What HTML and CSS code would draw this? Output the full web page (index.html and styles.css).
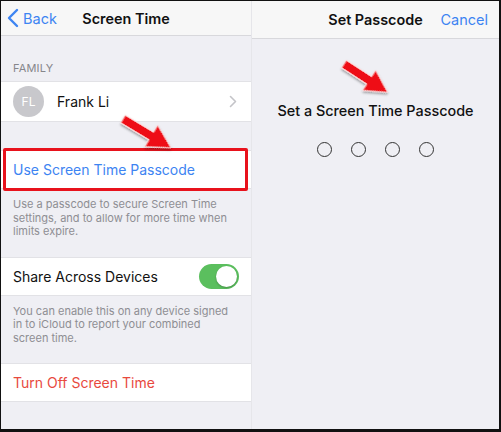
FILE: index.html
```html
<!DOCTYPE html>
<html lang="en">
<head>
  <meta charset="UTF-8">
  <title>Screen Time Passcode</title>
  <link rel="stylesheet" href="styles.css">
</head>
<body>
<div class="frame">
  <div class="panel panel-left">
    <div class="nav">
      <div class="nav-back">
        <svg class="chevron-back" width="12" height="20" viewBox="0 0 12 20">
          <path d="M10 2 L2 10 L10 18" fill="none" stroke="#3d84f2" stroke-width="2.4" stroke-linecap="round" stroke-linejoin="round"/>
        </svg>
        <span>Back</span>
      </div>
      <div class="nav-title">Screen Time</div>
    </div>

    <div class="section-header">FAMILY</div>
    <div class="group group-first">
      <div class="row">
        <div class="avatar">FL</div>
        <div class="row-label">Frank Li</div>
        <svg class="chevron" width="8" height="13" viewBox="0 0 8 13">
          <path d="M1.5 1.5 L6.5 6.5 L1.5 11.5" fill="none" stroke="#c4c4c8" stroke-width="1.6" stroke-linecap="round" stroke-linejoin="round"/>
        </svg>
      </div>
    </div>

    <div class="group group-spaced highlight">
      <div class="row">
        <div class="row-label link">Use Screen Time Passcode</div>
      </div>
    </div>
    <div class="section-footer">Use a passcode to secure Screen Time settings, and to allow for more time when limits expire.</div>

    <div class="group group-after-footer">
      <div class="row">
        <div class="row-label">Share Across Devices</div>
        <div class="toggle"><div class="knob"></div></div>
      </div>
    </div>
    <div class="section-footer">You can enable this on any device signed in to iCloud to report your combined screen time.</div>

    <div class="group group-after-footer">
      <div class="row">
        <div class="row-label danger">Turn Off Screen Time</div>
      </div>
    </div>
  </div>

  <div class="panel panel-right">
    <div class="nav nav-tall">
      <div class="nav-title">Set Passcode</div>
      <div class="nav-action">Cancel</div>
    </div>
    <div class="passcode">
      <div class="passcode-title">Set a Screen Time Passcode</div>
      <div class="dots">
        <span class="dot"></span>
        <span class="dot"></span>
        <span class="dot"></span>
        <span class="dot"></span>
      </div>
    </div>
  </div>

  <!-- annotation arrows -->
  <svg class="arrows" width="498" height="428" viewBox="0 0 498 428">
    <defs>
      <filter id="shadow" x="-30%" y="-30%" width="160%" height="160%">
        <feDropShadow dx="1" dy="1.5" stdDeviation="1.2" flood-color="#000" flood-opacity="0.35"/>
      </filter>
    </defs>
    <g transform="translate(122 118) rotate(31)" filter="url(#shadow)">
      <polygon points="0,-4.5 33,-4.5 33,-12.5 56,0 33,12.5 33,4.5 0,4.5" fill="#ee0a12" stroke="#ffd9d9" stroke-width="1"/>
    </g>
    <g transform="translate(343 63) rotate(33)" filter="url(#shadow)">
      <polygon points="0,-4.5 30,-4.5 30,-12 52,0 30,12 30,4.5 0,4.5" fill="#ee0a12" stroke="#ffd9d9" stroke-width="1"/>
    </g>
  </svg>
</div>
</body>
</html>
```

FILE: styles.css
```css
body {
  margin: 0;
  font-family: 'Inter', 'Liberation Sans', sans-serif;
  background: #fff;
}

.frame {
  position: relative;
  width: 501px;
  height: 432px;
  box-sizing: border-box;
  border-style: solid;
  border-color: #111;
  border-width: 1px 2px 3px 1px;
  display: flex;
  background: #efeff4;
  overflow: hidden;
}

.panel {
  display: flex;
  flex-direction: column;
  background: #efeff4;
}

.panel-left {
  width: 250px;
}

.panel-right {
  flex: 1;
  border-left: 1px solid #e6e6ea;
}

.nav {
  position: relative;
  height: 34px;
  flex-shrink: 0;
  background: #f7f7f7;
  border-bottom: 1px solid #d8d8dc;
  display: flex;
  align-items: center;
  justify-content: center;
}

.nav-tall {
  height: 37px;
}

.nav-title {
  font-size: 14.4px;
  font-weight: 600;
  color: #111;
}

.nav-back {
  position: absolute;
  left: 6px;
  top: 0;
  bottom: 0;
  display: flex;
  align-items: center;
  gap: 4px;
  color: #3d84f2;
  font-size: 14.5px;
}

.nav-action {
  position: absolute;
  right: 11px;
  top: 0;
  bottom: 0;
  display: flex;
  align-items: center;
  color: #3d84f2;
  font-size: 14.5px;
}

.section-header {
  padding: 25px 12px 6px;
  font-size: 11px;
  color: #86868b;
  letter-spacing: 0.2px;
}

.group {
  background: #fff;
  border-top: 1px solid #e2e2e6;
  border-bottom: 1px solid #e2e2e6;
}

.group-spaced {
  margin-top: 28px;
}

.group-after-footer {
  margin-top: 18px;
}

.row {
  display: flex;
  align-items: center;
  height: 37px;
  padding: 0 12px;
}

.group-first .row {
  height: 39px;
}

.avatar {
  width: 31px;
  height: 31px;
  border-radius: 50%;
  background: #c8c8cc;
  color: #fff;
  font-size: 12px;
  display: flex;
  align-items: center;
  justify-content: center;
  margin-right: 13px;
}

.row-label {
  flex: 1;
  font-size: 14px;
  color: #111;
}

.link {
  color: #3d84f2;
}

.danger {
  color: #e8493e;
}

.chevron {
  margin-right: 2px;
}

.highlight {
  position: relative;
}

.highlight::after {
  content: "";
  position: absolute;
  left: 2px;
  right: 3px;
  top: -3px;
  bottom: -3px;
  border: 3px solid #e8121c;
  border-radius: 2px;
}

.section-footer {
  padding: 9px 14px 0 12px;
  font-size: 11px;
  line-height: 13.5px;
  color: #8e8e93;
}

.toggle {
  width: 40px;
  height: 25px;
  border-radius: 13px;
  background: #5bbf5e;
  position: relative;
}

.knob {
  position: absolute;
  right: 2px;
  top: 2px;
  width: 21px;
  height: 21px;
  border-radius: 50%;
  background: #fff;
  box-shadow: 0 1px 2px rgba(0, 0, 0, 0.25);
}

.passcode {
  display: flex;
  flex-direction: column;
  align-items: center;
  padding-top: 63px;
}

.passcode-title {
  font-size: 14.4px;
  font-weight: 500;
  color: #111;
}

.dots {
  display: flex;
  gap: 19px;
  margin-top: 23px;
}

.dot {
  width: 13px;
  height: 13px;
  border: 1.3px solid #333;
  border-radius: 50%;
}

.arrows {
  position: absolute;
  left: 0;
  top: 0;
  pointer-events: none;
}
```
